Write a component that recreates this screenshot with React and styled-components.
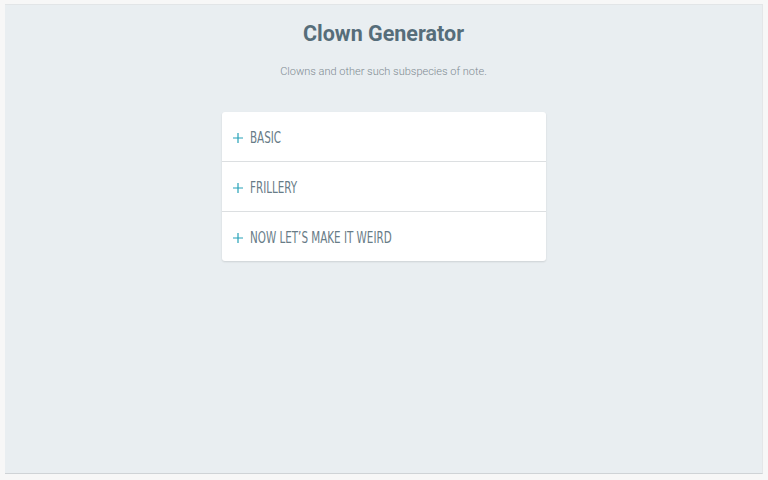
import React from 'react';
import styled, { createGlobalStyle } from 'styled-components';

const Global = createGlobalStyle`
  html, body {
    margin: 0;
    padding: 0;
    background: #f7f7f7;
  }
  body {
    font-family: Roboto, "Liberation Sans", sans-serif;
  }
`;

// outer frame with the light grey panel inside
const Page = styled.div`
  width: 768px;
  height: 480px;
  box-sizing: border-box;
  padding: 4px 5px 6px 5px;
`;

const Panel = styled.main`
  height: 100%;
  box-sizing: border-box;
  background: #e9eef1;
  border-top: 1px solid #e2e5e7;
  border-bottom: 1px solid #cfd3d6;
  border-right: 1px solid #e4e6e8;
  display: flex;
  flex-direction: column;
  align-items: center;
  padding-top: 16px;
`;

const Title = styled.h1`
  margin: 0;
  font-size: 21.5px;
  line-height: 26px;
  font-weight: 700;
  color: #566d7a;
`;

const Subtitle = styled.p`
  margin: 18px 0 0;
  font-size: 11px;
  line-height: 14px;
  font-weight: 300;
  color: #7f8b92;
`;

const Card = styled.section`
  margin-top: 33px;
  width: 324px;
  background: #fff;
  border-radius: 3px;
  box-shadow: 0 1px 2px rgba(0, 0, 0, 0.12);
`;

const Row = styled.div`
  height: 49px;
  display: flex;
  align-items: center;
  padding-left: 11px;
  padding-top: 2px;
  box-sizing: border-box;
  border-top: ${p => (p.$first ? 'none' : '1px solid #dcdfe1')};
  height: ${p => (p.$first ? '49px' : '50px')};
`;

const Plus = styled.svg`
  width: 10px;
  height: 10px;
  flex: none;
  margin-right: 7px;
`;

// condensed light caps, squeezed to match the narrow heading face
const Label = styled.span`
  display: inline-block;
  font-family: "DejaVu Sans Condensed", "Liberation Sans Narrow", Roboto, sans-serif;
  font-stretch: condensed;
  font-weight: 300;
  font-size: 16px;
  color: #687c87;
  white-space: nowrap;
  transform: scaleX(0.72);
  transform-origin: left center;
`;

const sections = ['BASIC', 'FRILLERY', 'NOW LET’S MAKE IT WEIRD'];

export default function App() {
  return (
    <>
      <Global />
      <Page>
        <Panel>
          <Title>Clown Generator</Title>
          <Subtitle>Clowns and other such subspecies of note.</Subtitle>
          <Card>
            {sections.map((s, i) => (
              <Row key={s} $first={i === 0}>
                <Plus viewBox="0 0 10 10">
                  <path d="M5 0v10M0 5h10" stroke="#26a2b8" strokeWidth="1.2" />
                </Plus>
                <Label>{s}</Label>
              </Row>
            ))}
          </Card>
        </Panel>
      </Page>
    </>
  );
}
